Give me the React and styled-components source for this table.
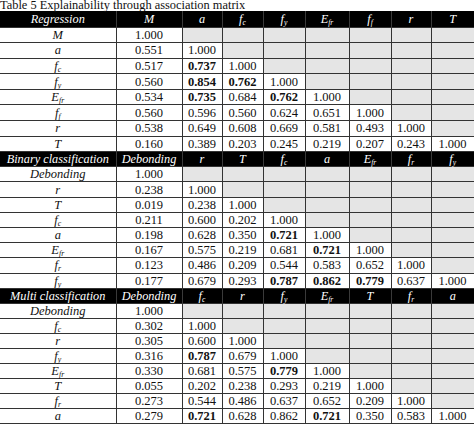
import React from 'react';
import styled, { createGlobalStyle } from 'styled-components';

const SERIF = `'Liberation Serif', 'Times New Roman', Times, serif`;

const GlobalStyle = createGlobalStyle`
  body {
    margin: 0;
    background: #ffffff;
    font-family: ${SERIF};
    color: #111;
  }
`;

// label keys -> [base, subscript]
const SYMBOLS = {
  M: ['M'],
  a: ['a'],
  r: ['r'],
  T: ['T'],
  fc: ['f', 'c'],
  fy: ['f', 'y'],
  ff: ['f', 'f'],
  fr: ['f', 'r'],
  Efr: ['E', 'fr'],
  Debonding: ['Debonding'],
};

const sections = [
  {
    title: 'Regression',
    head: 16,
    row: 15.6,
    cols: ['M', 'a', 'fc', 'fy', 'Efr', 'ff', 'r', 'T'],
    rows: [
      ['M', ['1.000']],
      ['a', ['0.551', '1.000']],
      ['fc', ['0.517', '*0.737', '1.000']],
      ['fy', ['0.560', '*0.854', '*0.762', '1.000']],
      ['Efr', ['0.534', '*0.735', '0.684', '*0.762', '1.000']],
      ['ff', ['0.560', '0.596', '0.560', '0.624', '0.651', '1.000']],
      ['r', ['0.538', '0.649', '0.608', '0.669', '0.581', '0.493', '1.000']],
      ['T', ['0.160', '0.389', '0.203', '0.245', '0.219', '0.207', '0.243', '1.000']],
    ],
  },
  {
    title: 'Binary classification',
    head: 15,
    row: 15.2,
    cols: ['Debonding', 'r', 'T', 'fc', 'a', 'Efr', 'fr', 'fy'],
    rows: [
      ['Debonding', ['1.000']],
      ['r', ['0.238', '1.000']],
      ['T', ['0.019', '0.238', '1.000']],
      ['fc', ['0.211', '0.600', '0.202', '1.000']],
      ['a', ['0.198', '0.628', '0.350', '*0.721', '1.000']],
      ['Efr', ['0.167', '0.575', '0.219', '0.681', '*0.721', '1.000']],
      ['fr', ['0.123', '0.486', '0.209', '0.544', '0.583', '0.652', '1.000']],
      ['fy', ['0.177', '0.679', '0.293', '*0.787', '*0.862', '*0.779', '0.637', '1.000']],
    ],
  },
  {
    title: 'Multi classification',
    head: 15,
    row: 15,
    cols: ['Debonding', 'fc', 'r', 'fy', 'Efr', 'T', 'fr', 'a'],
    rows: [
      ['Debonding', ['1.000']],
      ['fc', ['0.302', '1.000']],
      ['r', ['0.305', '0.600', '1.000']],
      ['fy', ['0.316', '*0.787', '0.679', '1.000']],
      ['Efr', ['0.330', '0.681', '0.575', '*0.779', '1.000']],
      ['T', ['0.055', '0.202', '0.238', '0.293', '0.219', '1.000']],
      ['fr', ['0.273', '0.544', '0.486', '0.637', '0.652', '0.209', '1.000']],
      ['a', ['0.279', '*0.721', '0.628', '0.862', '*0.721', '0.350', '0.583', '1.000']],
    ],
  },
];

const widths = [116, 66, 40, 41, 42, 44, 42, 40, 43];

const Symbol = ({ name }) => {
  const [base, sub] = SYMBOLS[name] || [name];
  return (
    <Sym>
      {base}
      {sub && <Sub>{sub}</Sub>}
    </Sym>
  );
};

const App = () => (
  <>
    <GlobalStyle />
    <Page>
      <Caption>Table 5 Explainability through association matrix</Caption>
      <Grid>
        <colgroup>
          {widths.map((w, i) => (
            <col key={i} style={{ width: w }} />
          ))}
        </colgroup>
        {sections.map((s) => (
          <tbody key={s.title}>
            <HeadRow $h={s.head}>
              <HeadCell>{s.title}</HeadCell>
              {s.cols.map((c) => (
                <HeadCell key={c}>
                  <Symbol name={c} />
                </HeadCell>
              ))}
            </HeadRow>
            {s.rows.map(([label, vals]) => (
              <Row key={label} $h={s.row}>
                <LabelCell>
                  <Symbol name={label} />
                </LabelCell>
                {s.cols.map((c, i) => {
                  const v = vals[i];
                  if (v === undefined) return <ValueCell key={c} $empty />;
                  const bold = v.startsWith('*');
                  return (
                    <ValueCell key={c} $bold={bold}>
                      {bold ? v.slice(1) : v}
                    </ValueCell>
                  );
                })}
              </Row>
            ))}
          </tbody>
        ))}
      </Grid>
    </Page>
  </>
);

export default App;

const Page = styled.div`
  width: 474px;
  overflow: hidden;
  font-family: ${SERIF};
`;

const Caption = styled.div`
  font-family: ${SERIF};
  font-size: 12.4px;
  line-height: 11px;
  height: 11px;
  white-space: nowrap;
  color: #111;
`;

const Grid = styled.table`
  width: 474px;
  table-layout: fixed;
  border-collapse: collapse;
  font-family: ${SERIF};
  font-size: 12.5px;
  color: #111;
`;

const HeadRow = styled.tr`
  height: ${(p) => p.$h}px;
  background: #000;
`;

const HeadCell = styled.th`
  padding: 0;
  font-family: ${SERIF};
  font-weight: normal;
  font-style: italic;
  font-size: 12.3px;
  color: #fff;
  text-align: center;
  white-space: nowrap;
  line-height: 12px;
  border-left: 1px solid #3a3a3a;
  &:first-child {
    border-left: none;
  }
`;

const Row = styled.tr`
  height: ${(p) => p.$h}px;
`;

const cellBase = `
  padding: 0;
  font-family: ${SERIF};
  text-align: center;
  white-space: nowrap;
  line-height: 12px;
  border: 1px solid #333;
`;

const LabelCell = styled.td`
  ${cellBase}
  border-left: none;
  font-style: italic;
  font-size: 12.5px;
`;

const ValueCell = styled.td`
  ${cellBase}
  font-size: 12.5px;
  font-weight: ${(p) => (p.$bold ? 'bold' : 'normal')};
  background: ${(p) => (p.$empty ? '#e5e5e5' : '#fff')};
`;

const Sym = styled.span`
  font-style: italic;
`;

const Sub = styled.span`
  font-size: 0.62em;
  line-height: 0;
  position: relative;
  top: 0.25em;
`;
